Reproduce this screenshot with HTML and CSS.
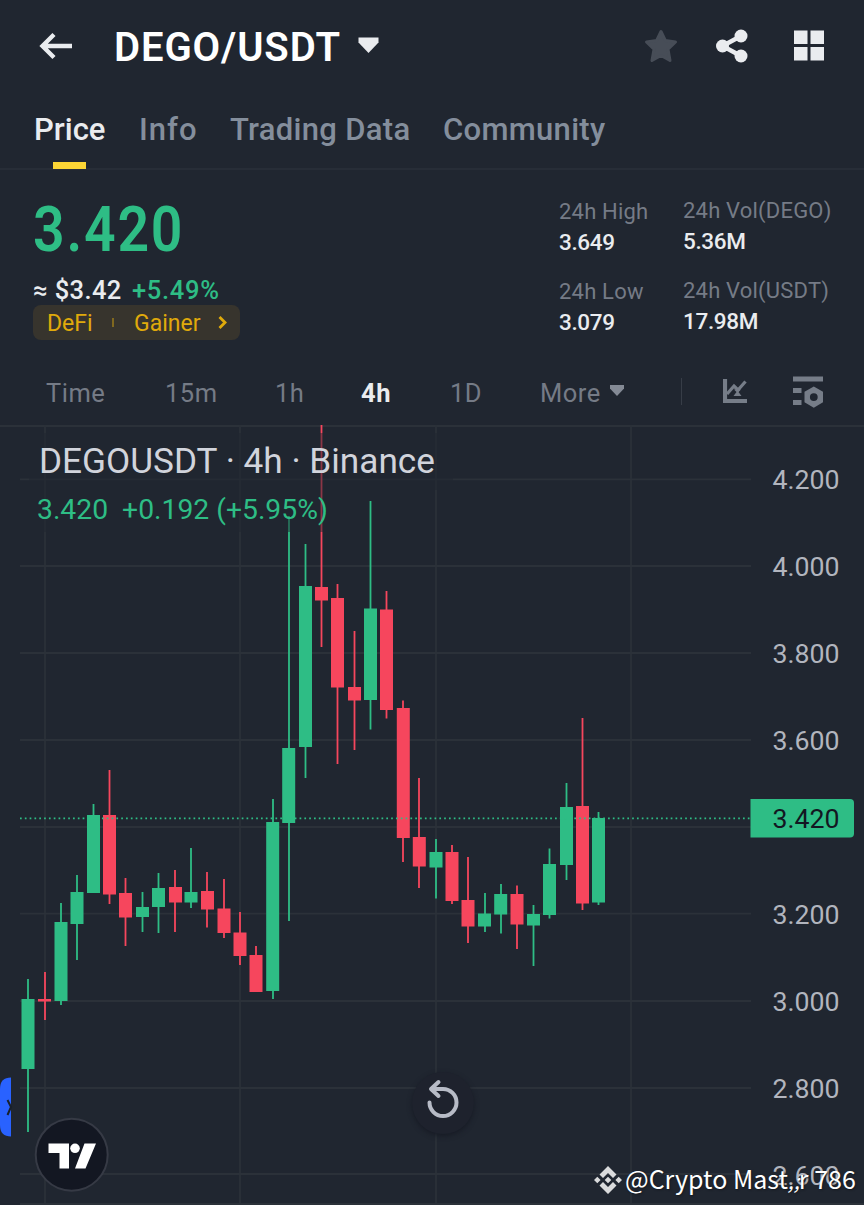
FILE: index.html
```html
<!DOCTYPE html>
<html lang="en">
<head>
<meta charset="utf-8">
<title>DEGO/USDT</title>
<link rel="stylesheet" href="styles.css">
</head>
<body>
<main class="app">
  <header class="header">
    <svg class="back" width="34" height="28" viewBox="0 0 34 28"><path d="M33 14H4M15 2.500L3.500 14L15 25.500" fill="none" stroke="#eaecef" stroke-width="4.400"/></svg>
    <h1 class="pair">DEGO/USDT</h1>
    <svg class="pair-caret" width="21" height="17" viewBox="0 0 21 17"><path d="M0.500 0.500H20.500V5.500L10.500 16L0.500 5.500Z" fill="#eaecef"/></svg>
    <div class="actions">
      <svg width="34" height="34" viewBox="0 0 34 34"><path d="M17 2.500L21.300 11.500L31.500 13L24 20.300L26 31.500L17 26.500L8 31.500L10 20.300L2.500 13L12.700 11.500Z" fill="#474d57" stroke="#474d57" stroke-width="3" stroke-linejoin="round"/></svg>
      <svg width="32" height="34" viewBox="0 0 32 34"><path d="M25 7L6.500 17L25 27" fill="none" stroke="#eaecef" stroke-width="4.500"/><circle cx="25" cy="7" r="6.500" fill="#eaecef"/><circle cx="6.500" cy="17" r="6.500" fill="#eaecef"/><circle cx="25" cy="27" r="6.500" fill="#eaecef"/></svg>
      <svg width="30" height="31" viewBox="0 0 30 31"><path d="M0 0.500H13.500V14H0ZM16.500 0.500H30V14H16.500ZM0 17H13.500V30.500H0ZM16.500 17H30V30.500H16.500Z" fill="#eaecef"/></svg>
    </div>
  </header>

  <nav class="tabs">
    <span class="tab tab-active">Price</span>
    <span class="tab tab-info">Info</span>
    <span class="tab tab-trading">Trading Data</span>
    <span class="tab tab-community">Community</span>
  </nav>

  <section class="summary">
    <div class="quote">
      <div class="last">3.420</div>
      <div class="fiat"><span class="approx">≈ $3.42</span><span class="change">+5.49%</span></div>
      <div class="tags">
        <span class="tag-defi">DeFi</span><i class="tag-sep"></i><span class="tag-gainer">Gainer</span>
        <svg width="9" height="13" viewBox="0 0 9 13"><path d="M1.500 1L7 6.500L1.500 12" fill="none" stroke="#e0aa0b" stroke-width="2.800"/></svg>
      </div>
    </div>
    <dl class="stats">
      <div class="stat"><dt>24h High</dt><dd>3.649</dd></div>
      <div class="stat stat-vol"><dt>24h Vol(DEGO)</dt><dd>5.36M</dd></div>
      <div class="stat"><dt>24h Low</dt><dd>3.079</dd></div>
      <div class="stat stat-vol"><dt>24h Vol(USDT)</dt><dd>17.98M</dd></div>
    </dl>
  </section>

  <div class="intervals">
    <span>Time</span><span>15m</span><span>1h</span><span class="interval-active">4h</span><span>1D</span>
    <span class="more">More<svg width="14" height="11" viewBox="0 0 14 11"><path d="M0 0H14V3.500L7 11L0 3.500Z" fill="#848a95"/></svg></span>
    <i class="divider"></i>
    <svg width="24" height="24" viewBox="0 0 24 24"><path d="M2 0V22H24" fill="none" stroke="#767d88" stroke-width="4.200"/><path d="M4 15L11 7L15 11L22.500 2.500" fill="none" stroke="#767d88" stroke-width="3.200"/><path d="M11 10.500H18L15.500 13L18.500 17H10.500L13.500 13Z" fill="#767d88"/></svg>
    <svg class="settings" width="30" height="32" viewBox="0 0 30 32"><path d="M0 0.500H30V5.500H0ZM0 12H8.500V17H0ZM0 24H8.500V29H0Z" fill="#767d88"/><path fill-rule="evenodd" d="M20.800 10.500L30 15.700V26.300L20.800 31.700L11.500 26.300V15.700ZM20.800 17.200A3.900 3.900 0 1 0 20.800 25A3.900 3.900 0 1 0 20.800 17.200Z" fill="#767d88"/></svg>
  </div>

  <section class="chart">
    <svg class="plot" width="864" height="780" viewBox="0 425 864 780">
      <g stroke="#2b3139" stroke-width="1.800">
        <path d="M0 426H864"/>
        <path d="M20 479.300H751M20 566H751M20 653H751M20 740H751M20 827H751M20 913.700H751M20 1001H751M20 1088H751M20 1174H751M20 1204H864M45 425V1205M240 425V1205M436 425V1205M631 425V1205"/>
      </g>
      <g stroke="#2ebd85" stroke-width="1.800">
        <path d="M28 979V1132M61 903V1005M77 875V960M93.500 804V893M142.500 892V932M158.500 873V933M191 848V908M273 799V999M289 516V921M305.500 544V778M370.500 501V729.500M436 839V898.500M485 893V932M501 884V933.500M533.500 905V966M549.500 848.500V918.500M566.500 783V880M598.500 812V905"/>
        <path stroke-width="13" d="M28 999V1069M61 922V1001M77 892V924M93.500 815V893M142.500 907V917M158.500 888V907M191 892V902.500M272.700 822V991M288.700 748V823M305.500 586V747M370.500 608.500V700M436 852V867.500M484.500 913.500V926.500M500.700 894V914.500M533.500 914V925.500M549.500 864V915M566.500 807V865M598.500 818V902.500"/>
      </g>
      <g stroke="#f6465d" stroke-width="1.800">
        <path d="M45 972V1020M109.500 770V904M125.500 878V946M175 870V932M207 872V927.500M224 879V938M240 912V965M256 946V992M321.500 425V647M337.500 584V764M354.500 631V750M386.500 591V718.500M403 700.500V862M419 778V888M452 845V904M468 857V943M517 885.500V949M582.500 718V910"/>
        <path stroke-width="13" d="M44.500 999V1001.500M109.500 815V894.500M125.500 893V917.500M175.500 887V902.500M207.500 891V909.500M224 908.500V933M240 932.500V956M256 955V992M321.500 587V600.500M337.500 598V687.500M354.500 687V700.500M386.500 609.500V710M403.300 708V838M419.300 837V866.500M452 852V901M468 900V926.500M517 894V924.500M582.500 806V903.500"/>
      </g>
      <path d="M20 818.300H751" stroke="#2ebd85" stroke-width="1.700" stroke-dasharray="1.700 3.120"/>
      <g fill="#202630" fill-opacity="0.500"><path d="M29 433H453V490H29Z"/><path d="M29 490H340V532H29Z"/></g>
      <path d="M750.500 799H850A4 4 0 0 1 854 803V833.500A4 4 0 0 1 850 837.500H750.500Z" fill="#2ebd85"/>
      <g class="axis">
        <text x="772.500" y="489">4.200</text><text x="772.500" y="576">4.000</text><text x="772.500" y="662.500">3.800</text><text x="772.500" y="749.500">3.600</text>
        <text x="772.500" y="828" class="axis-last">3.420</text>
        <text x="772.500" y="924">3.200</text><text x="772.500" y="1010.500">3.000</text><text x="772.500" y="1098">2.800</text><text x="772.500" y="1184.500">2.600</text>
      </g>
      <path d="M11 1077.500C4 1077.500 0 1081 0 1089V1125C0 1133 4 1136.500 11 1136.500Z" fill="#2962ff"/>
      <path d="M7.500 1100L11 1107L7.500 1115" fill="none" stroke="#18202b" stroke-width="2"/>
      <circle cx="71.700" cy="1154.700" r="36" fill="#131722" stroke="#363a45" stroke-width="2"/>
      <path d="M48.500 1143.500H69V1168.500H59.500V1153H48.500ZM84.500 1143.500H96L85.500 1168.500H75Z" fill="#fff"/><circle cx="75" cy="1148.300" r="4.800" fill="#fff"/>
    </svg>
    <div class="legend"><div class="legend-title">DEGOUSDT · 4h · Binance</div><div class="legend-values">3.420&nbsp; +0.192 (+5.95%)</div></div>
    <div class="reset"><svg width="34" height="42" viewBox="0 0 34 42"><path d="M3.500 23.500A13.500 13.500 0 1 0 17 10H6M12.500 3L5 10L12.500 17" fill="none" stroke="#b7bbc6" stroke-width="4" stroke-linecap="round" stroke-linejoin="round"/></svg></div>
    <div class="watermark">
      <svg width="28" height="28" viewBox="0 0 28 28"><path d="M14 0L22.500 8.500L19 12L14 7L9 12L5.500 8.500ZM14 28L5.500 19.500L9 16L14 21L19 16L22.500 19.500ZM14 10.700L17.300 14L14 17.300L10.700 14ZM3.300 10.700L6.600 14L3.300 17.300L0 14ZM24.700 10.700L28 14L24.700 17.300L21.400 14Z" fill="#dadbdc"/></svg>
      <span>@Crypto Mast<i class="small-e">,;</i>r 786</span>
    </div>
  </section>
</main>
</body>
</html>
```

FILE: styles.css
```css
* { box-sizing: border-box; }
body { margin: 0; background: #202630; font-family: Roboto, "Liberation Sans", sans-serif; color: #eaecef; }
.app { width: 864px; height: 1205px; overflow: hidden; }
svg { display: block; flex: none; }

.header { height: 90px; display: flex; align-items: center; padding: 1px 40px 0 39px; }
.pair { margin: 5px 0 0 41px; width: 230px; font-size: 40px; line-height: 48px; font-weight: 600; letter-spacing: 0.9px; color: #fff; white-space: nowrap; }
.pair-caret { margin-left: 14px; }
.actions { display: flex; align-items: center; margin-left: auto; }
.actions svg + svg { margin-left: 38px; }
.actions svg:last-child { margin-left: 46px; }

.tabs { height: 80px; display: grid; grid-template-columns: 105px 91px 213px 1fr; padding-left: 34px; border-bottom: 2px solid #272d37; }
.tab { font-size: 31px; line-height: 36px; padding-top: 22px; color: #848e9c; font-weight: 500; letter-spacing: 0.3px; white-space: nowrap; }
.tab-info { letter-spacing: 1px; }
.tab-active { color: #eaecef; letter-spacing: 0; position: relative; }
.tab-active::after { content: ""; position: absolute; left: 19px; bottom: -1px; width: 33px; height: 7px; background: #fcd535; }

.summary { height: 186px; display: flex; justify-content: space-between; }
.quote { padding: 29px 0 0 33px; }
.last { width: 180px; font-size: 63px; line-height: 62px; font-weight: 600; color: #2ebd85; letter-spacing: 2px; transform: scaleX(0.88); transform-origin: 0 50%; }
.fiat { display: flex; font-size: 25.500px; line-height: 30px; font-weight: 500; letter-spacing: 0.4px; margin-top: 14px; }
.approx { width: 99px; white-space: nowrap; }
.change { color: #2ebd85; letter-spacing: 0.7px; }
.tags { width: 207px; height: 35px; padding-left: 14px; border-radius: 8px; background: #37342d; color: #e0aa0b; font-size: 23px; line-height: 27px; display: flex; align-items: center; letter-spacing: 0; }
.tags span { padding-top: 1px; }
.tag-defi { width: 65px; }
.tag-sep { width: 2px; height: 9px; background: #80681f; }
.tag-gainer { width: 104px; padding-left: 20px; }
.stats { margin: 0; width: 305px; padding-top: 28px; display: grid; grid-template-columns: 124px 1fr; grid-auto-rows: 80px; }
.stat-vol { margin-top: -1px; }
.stats dt { font-size: 22px; line-height: 26px; color: #757b86; letter-spacing: 0.2px; white-space: nowrap; padding-top: 1px; height: 27px; }
.stats dd { margin: 4px 0 0; font-size: 22.500px; line-height: 26px; letter-spacing: -0.35px; font-weight: 500; }

.intervals { height: 69px; display: grid; grid-template-columns: 119px 110px 86px 89px 90px 141px 42px 70px 1fr; align-items: center; padding: 1px 0 0 46px; font-size: 25.500px; color: #757b86; letter-spacing: 0.5px; }
.intervals > span { padding-top: 3px; }
.interval-active { color: #eaecef; font-weight: 700; }
.more { display: flex; align-items: center; }
.more svg { margin: -5px 0 0 9px; }
.divider { width: 1px; height: 27px; background: #373d47; }
.settings { margin-top: 1px; }

.chart { position: relative; height: 780px; }
.axis { font-size: 26.700px; fill: #b2b5be; }
.axis .axis-last { fill: #131722; }
.legend { position: absolute; left: 39px; top: 12px; white-space: nowrap; }
.legend-title { font-size: 35.200px; line-height: 48px; color: #d1d4dc; }
.legend-values { margin-left: -2px; font-size: 28.300px; line-height: 49px; color: #2ebd85; }
.reset { position: absolute; left: 412px; top: 647px; width: 62px; height: 62px; padding: 7px 0 0 14px; border-radius: 50%; background: #1e222d; box-shadow: 0 2px 5px #171b25; }
.watermark { position: absolute; left: 594px; top: 737px; display: flex; align-items: center; gap: 3px; font-family: "Noto Sans CJK SC", sans-serif; font-size: 25px; line-height: 36px; color: #fff; white-space: nowrap; text-shadow: 1px 1px 2px #15191f; }
.watermark span { margin-top: -2px; }
.small-e { display: inline-block; width: 11px; font-size: 21px; }
```
